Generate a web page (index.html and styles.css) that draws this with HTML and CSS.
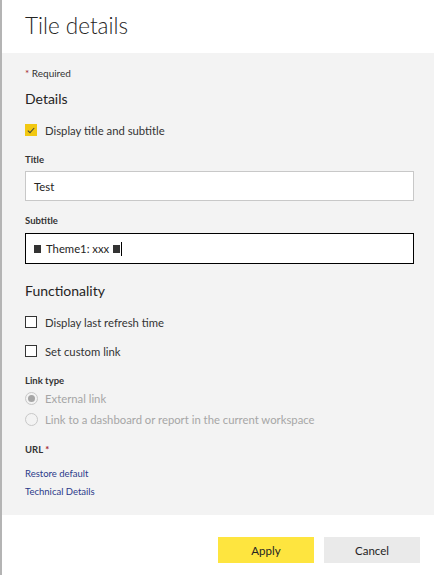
FILE: index.html
```html
<!DOCTYPE html>
<html lang="en">
<head>
    <meta charset="UTF-8">
    <meta name="viewport" content="width=device-width, initial-scale=1.0">
    <title>Tile details</title>
    <link rel="stylesheet" href="styles.css">
</head>
<body>

    <header class="pane-header">
        <h1>Tile details</h1>
    </header>

    <div class="pane-body">
        <p class="required"><span class="star">*</span> Required</p>

        <h2 class="section-title">Details</h2>

        <label class="check-row">
            <span class="box checked">
                <svg width="8" height="7" viewBox="0 0 8 7"><path d="M0.8 3.6 L3 5.7 L7.2 1" fill="none" stroke="#4a4a3a" stroke-width="1.1"/></svg>
            </span>
            Display title and subtitle
        </label>

        <div class="field-label title-label">Title</div>
        <div class="text-input">Test</div>

        <div class="field-label subtitle-label">Subtitle</div>
        <div class="text-input focused">
            <span class="sq"></span>Theme1: xxx<span class="sq last"></span><span class="caret"></span>
        </div>

        <h2 class="section-title func-title">Functionality</h2>

        <label class="check-row refresh-row">
            <span class="box"></span>
            Display last refresh time
        </label>
        <label class="check-row link-row">
            <span class="box"></span>
            Set custom link
        </label>

        <div class="field-label linktype-label">Link type</div>
        <div class="radio-row first-radio">
            <span class="radio on"></span>
            External link
        </div>
        <div class="radio-row second-radio">
            <span class="radio"></span>
            Link to a dashboard or report in the current workspace
        </div>

        <div class="field-label url-label">URL <span class="star">*</span></div>

        <a href="#" class="plain-link restore">Restore default</a>
        <a href="#" class="plain-link tech">Technical Details</a>
    </div>

    <footer class="pane-footer">
        <button class="btn apply">Apply</button>
        <button class="btn cancel">Cancel</button>
    </footer>

</body>
</html>
```

FILE: styles.css
```css
* {
    margin: 0;
    padding: 0;
    box-sizing: border-box;
}

body {
    font-family: Lato, 'Noto Sans', sans-serif;
    background-color: #fff;
    color: #333;
    border-left: 2px solid #b4b4b4;
    min-height: 575px;
}

/* header */

.pane-header {
    height: 53px;
    padding: 11px 0 0 23px;
}

.pane-header h1 {
    font-size: 22.5px;
    font-weight: 300;
    line-height: 30px;
    color: #252423;
}

/* body */

.pane-body {
    background-color: #f3f3f3;
    height: 462px;
    padding: 13px 20px 0 23px;
}

.required {
    font-size: 10px;
    line-height: 14px;
}

.star {
    color: #a4262c;
}

.section-title {
    font-size: 14px;
    font-weight: 400;
    line-height: 20px;
    margin-top: 9px;
    color: #252423;
}

.func-title {
    margin-top: 17px;
}

.check-row {
    display: flex;
    align-items: center;
    height: 16px;
    font-size: 11.3px;
    margin-top: 13px;
}

.box {
    width: 12px;
    height: 12px;
    border: 1px solid #333;
    background-color: #fff;
    margin-right: 8px;
    display: flex;
    align-items: center;
    justify-content: center;
}

.box.checked {
    background-color: #f2c811;
    border-color: #f2c811;
}

.field-label {
    font-size: 9.5px;
    font-weight: 700;
    line-height: 14px;
}

.title-label {
    margin-top: 15px;
}

.subtitle-label {
    margin-top: 13px;
}

.linktype-label {
    margin-top: 15px;
}

.url-label {
    margin-top: 16px;
}

.text-input {
    height: 30px;
    width: 389px;
    margin-top: 4px;
    background-color: #fff;
    border: 1px solid #c8c8c8;
    font-size: 11.3px;
    padding: 0 8px;
    display: flex;
    align-items: center;
    color: #252423;
}

.text-input.focused {
    border-color: #000;
    margin-top: 5px;
    height: 31px;
}

.sq {
    width: 7px;
    height: 8px;
    background-color: #333;
    margin-right: 5px;
}

.sq.last {
    margin-left: 4px;
    margin-right: 1px;
}

.caret {
    width: 1px;
    height: 14px;
    background-color: #000;
}

.radio-row {
    display: flex;
    align-items: center;
    height: 16px;
    font-size: 11.3px;
    color: #a6a6a6;
}

.first-radio {
    margin-top: 2px;
}

.second-radio {
    margin-top: 5px;
}

.radio {
    width: 13px;
    height: 13px;
    border: 1px solid #c8c8c8;
    border-radius: 50%;
    margin-right: 7px;
    display: flex;
    align-items: center;
    justify-content: center;
}

.radio.on::after {
    content: "";
    width: 7px;
    height: 7px;
    border-radius: 50%;
    background-color: #a6a6a6;
}

.plain-link {
    display: block;
    font-size: 9.5px;
    line-height: 14px;
    color: #2b3a8a;
    text-decoration: none;
}

.restore {
    margin-top: 10px;
}

.tech {
    margin-top: 4px;
}

/* footer */

.pane-footer {
    display: flex;
    justify-content: flex-end;
    gap: 10px;
    padding: 22px 14px 0 0;
}

.btn {
    width: 96px;
    height: 26px;
    border: none;
    font-family: inherit;
    font-size: 11.5px;
    color: #252423;
    cursor: pointer;
}

.apply {
    background-color: #fee53f;
}

.cancel {
    background-color: #eaeaea;
}
```
